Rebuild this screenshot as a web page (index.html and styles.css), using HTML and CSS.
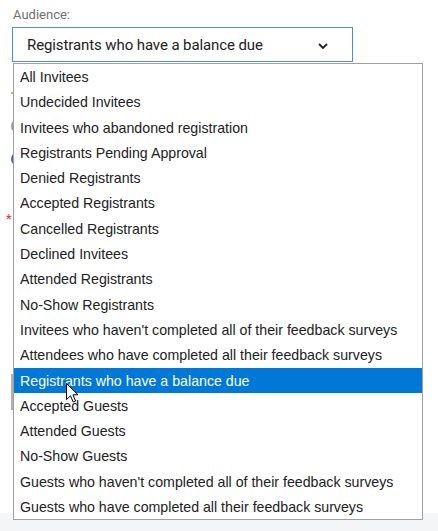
FILE: index.html
```html
<!DOCTYPE html>
<html lang="en">
<head>
    <meta charset="UTF-8">
    <meta name="viewport" content="width=device-width, initial-scale=1.0">
    <title>Audience</title>
    <link rel="stylesheet" href="styles.css">
</head>
<body>
    <div class="page">
        <div class="field">
            <label class="field-label">Audience:</label>
            <div class="select">
                <span class="select-value">Registrants who have a balance due</span>
                <svg class="chevron" width="10" height="6" viewBox="0 0 10 6">
                    <path d="M1 1 L5 5 L9 1" fill="none" stroke="#222" stroke-width="1.8"/>
                </svg>
            </div>
        </div>

        <div class="behind">
            <div class="mark-line"></div>
            <div class="mark-radio"></div>
            <div class="mark-radio on"></div>
            <div class="mark-req">*</div>
            <div class="mark-box"></div>
        </div>

        <ul class="listbox">
            <li>All Invitees</li>
            <li>Undecided Invitees</li>
            <li>Invitees who abandoned registration</li>
            <li>Registrants Pending Approval</li>
            <li>Denied Registrants</li>
            <li>Accepted Registrants</li>
            <li>Cancelled Registrants</li>
            <li>Declined Invitees</li>
            <li>Attended Registrants</li>
            <li>No-Show Registrants</li>
            <li>Invitees who haven't completed all of their feedback surveys</li>
            <li>Attendees who have completed all their feedback surveys</li>
            <li class="selected">Registrants who have a balance due</li>
            <li>Accepted Guests</li>
            <li>Attended Guests</li>
            <li>No-Show Guests</li>
            <li>Guests who haven't completed all of their feedback surveys</li>
            <li>Guests who have completed all their feedback surveys</li>
        </ul>

        <svg class="cursor" width="13" height="20" viewBox="0 0 13 20">
            <path d="M0.5 0.5 L0.5 16.5 L4.5 12.8 L7.2 19 L9.6 18 L7 11.8 L12 11.8 Z" fill="#fff" stroke="#000" stroke-width="1"/>
        </svg>
    </div>
    <div class="footer"></div>
</body>
</html>
```

FILE: styles.css
```css
body {
    margin: 0;
    background-color: #fff;
    font-family: Roboto, "Open Sans", sans-serif;
}
.page {
    position: relative;
    height: 513px;
}
.field {
    padding: 6px 0 0 12px;
}
.field-label {
    display: block;
    font-size: 13px;
    color: #707070;
    line-height: 18px;
    margin-left: 1px;
}
.select {
    width: 341px;
    height: 35px;
    margin-top: 3px;
    box-sizing: border-box;
    border: 1px solid #4a8fd9;
    display: flex;
    align-items: center;
    justify-content: space-between;
    padding: 0 24px 0 14px;
}
.select-value {
    font-size: 15px;
    color: #222;
    letter-spacing: -0.1px;
}
.chevron {
    margin-top: 2px;
}
.behind {
    display: flex;
    flex-direction: column;
    padding-left: 11px;
}
.mark-line {
    width: 4px;
    height: 2px;
    background-color: #e0b040;
    margin-top: 30px;
}
.mark-radio {
    width: 14px;
    height: 14px;
    border-radius: 50%;
    border: 2px solid #999;
    box-sizing: border-box;
    margin-top: 25px;
}
.mark-radio.on {
    border-color: #1a73e8;
    margin-top: 19px;
}
.mark-req {
    color: #e23b2e;
    font-size: 13px;
    margin: 46px 0 0 -5px;
    line-height: 14px;
}
.mark-box {
    width: 10px;
    height: 36px;
    border-left: 2px solid #b0b0b0;
    margin-top: 148px;
}
.listbox {
    position: absolute;
    left: 13px;
    top: 63px;
    width: 410px;
    box-sizing: border-box;
    margin: 0;
    padding: 0;
    list-style: none;
    background-color: #fff;
    border: 1px solid #a0a0a0;
    font-family: "Liberation Sans", Arial, sans-serif;
    font-size: 14.2px;
    color: #222;
}
.listbox li {
    height: 25.3px;
    line-height: 27px;
    padding-left: 6px;
    white-space: nowrap;
}
.listbox li.selected {
    background-color: #0078d7;
    color: #fff;
}
.cursor {
    position: absolute;
    left: 66px;
    top: 383px;
}
.footer {
    height: 18px;
    background-color: #f4f5f7;
}
```
